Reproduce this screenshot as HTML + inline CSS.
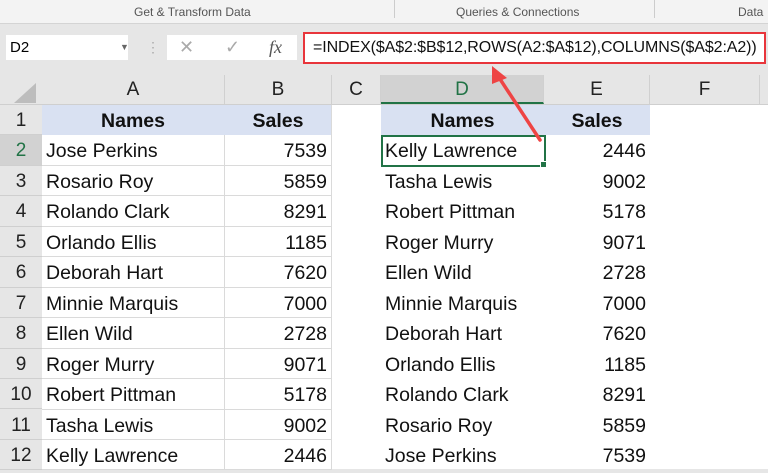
<!DOCTYPE html>
<html><head><style>
body{margin:0;width:768px;height:469px;overflow:hidden;background:#e6e6e6;font-family:"Liberation Sans",Calibri,sans-serif;position:relative}
.a{position:absolute}
.rib{top:0;left:0;width:768px;height:23px;background:#f3f3f3;border-bottom:1px solid #d4d4d4;font-size:12px;color:#555}
.cell{position:absolute;font-size:19.5px;color:#111;line-height:33px;white-space:nowrap}
.hdr{position:absolute;top:75px;height:29px;line-height:29px;text-align:center;font-size:19px;color:#222;border-right:1px solid #d0d0d0}
.rn{position:absolute;left:0;width:42px;text-align:center;font-size:19px;color:#222;background:#e6e6e6;border-bottom:1px solid #cfcfcf}
</style></head><body>
<div class="a rib">
<div class="a" style="left:134px;top:5px">Get &amp; Transform Data</div>
<div class="a" style="left:394px;top:0;width:1px;height:18px;background:#ccc"></div>
<div class="a" style="left:456px;top:5px">Queries &amp; Connections</div>
<div class="a" style="left:654px;top:0;width:1px;height:18px;background:#ccc"></div>
<div class="a" style="left:738px;top:5px">Data</div>
</div>
<div class="a" style="left:6px;top:35px;width:122px;height:25px;background:#fff;font-size:15px;line-height:25px;text-indent:4px">D2<span class="a" style="left:110px;top:0;font-size:9px;color:#666">▼</span></div>
<div class="a" style="left:146px;top:39px;color:#aaa;font-size:14px">⋮</div>
<div class="a" style="left:167px;top:35px;width:130px;height:25px;background:#fff;color:#aaa;font-size:18px;line-height:25px">
<span class="a" style="left:12px">✕</span><span class="a" style="left:58px">✓</span><span class="a" style="left:102px;font-family:'Liberation Serif',serif;font-style:italic;color:#555">fx</span></div>
<div class="a" style="left:303px;top:32px;width:459px;height:28px;background:#fff;border:2px solid #e8353b;font-size:16px;line-height:28px;text-indent:8px;color:#111;letter-spacing:-0.1px">=INDEX($A$2:$B$12,ROWS(A2:$A$12),COLUMNS($A$2:A2))</div>
<div class="a" style="left:42px;top:104px;width:726px;height:365px;background:#fff"></div>
<div class="a" style="left:0;top:75px;width:42px;height:29px;background:#e6e6e6"><div class="a" style="left:14px;top:8px;width:0;height:0;border-left:22px solid transparent;border-bottom:20px solid #bdbdbd"></div></div>
<div class="hdr" style="left:42px;width:182px">A</div>
<div class="hdr" style="left:225px;width:106px">B</div>
<div class="hdr" style="left:332px;width:48px">C</div>
<div class="hdr" style="left:381px;width:162px;background:#d2d2d2;color:#217346;border-bottom:2px solid #217346;height:27px">D</div>
<div class="hdr" style="left:544px;width:105px">E</div>
<div class="hdr" style="left:650px;width:109px">F</div>
<div class="a" style="left:0;top:104px;width:768px;height:1px;background:#cfcfcf"></div>
<div id="g"></div>
<script>
var A=[["Jose Perkins",7539],["Rosario Roy",5859],["Rolando Clark",8291],["Orlando Ellis",1185],["Deborah Hart",7620],["Minnie Marquis",7000],["Ellen Wild",2728],["Roger Murry",9071],["Robert Pittman",5178],["Tasha Lewis",9002],["Kelly Lawrence",2446]];
var h='',H=30.45,T=105;
for(var r=0;r<12;r++){var y=T+r*H;
h+='<div class="rn" style="top:'+y+'px;height:'+(H-1)+'px;line-height:'+(H+2)+'px;'+(r==1?'background:#d2d2d2;color:#217346':'')+'">'+(r+1)+'</div>';
h+='<div class="a" style="left:42px;top:'+(y+H-1)+'px;width:290px;height:1px;background:#dadada"></div>';
}
h+='<div class="a" style="left:224px;top:105px;width:1px;height:364px;background:#dadada"></div>';
h+='<div class="a" style="left:331px;top:105px;width:1px;height:364px;background:#dadada"></div>';
h+='<div class="a" style="left:42px;top:105px;width:289px;height:30px;background:#d9e1f2"></div>';
h+='<div class="a" style="left:381px;top:105px;width:269px;height:30px;background:#d9e1f2"></div>';
h+='<div class="cell" style="left:42px;top:105px;width:182px;text-align:center;font-weight:bold">Names</div>';
h+='<div class="cell" style="left:225px;top:105px;width:106px;text-align:center;font-weight:bold">Sales</div>';
h+='<div class="cell" style="left:381px;top:105px;width:163px;text-align:center;font-weight:bold">Names</div>';
h+='<div class="cell" style="left:544px;top:105px;width:106px;text-align:center;font-weight:bold">Sales</div>';
for(var i=0;i<11;i++){var y=T+(i+1)*H;var b=A[10-i];
h+='<div class="cell" style="left:46px;top:'+y+'px">'+A[i][0]+'</div>';
h+='<div class="cell" style="left:225px;top:'+y+'px;width:102px;text-align:right">'+A[i][1]+'</div>';
h+='<div class="cell" style="left:385px;top:'+y+'px">'+b[0]+'</div>';
h+='<div class="cell" style="left:544px;top:'+y+'px;width:102px;text-align:right">'+b[1]+'</div>';}
h+='<div class="a" style="left:381px;top:135px;width:161px;height:28px;border:2px solid #217346"></div>';
h+='<div class="a" style="left:540px;top:161px;width:5px;height:5px;background:#217346;border:1px solid #fff"></div>';
document.getElementById('g').innerHTML=h;
</script>
<svg class="a" style="left:0;top:0" width="768" height="469"><line x1="540" y1="140" x2="498" y2="76" stroke="#ee4444" stroke-width="3.5" stroke-linecap="round"/><polygon points="492,66 507,78 492,84" fill="#ee4444"/></svg>
</body></html>
